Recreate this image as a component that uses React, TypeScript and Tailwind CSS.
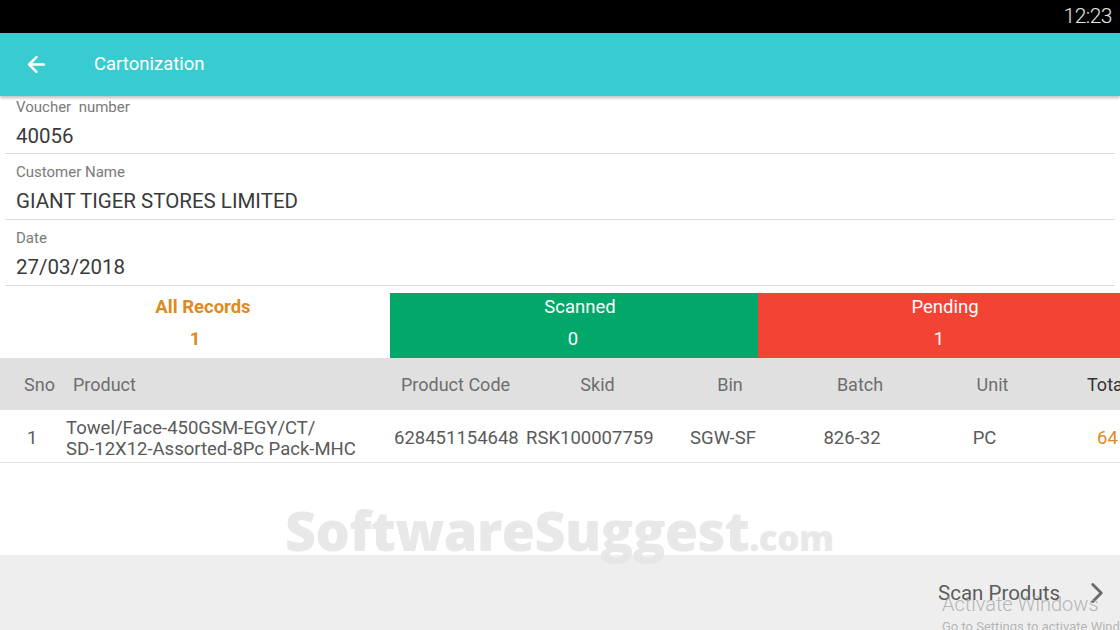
import { ArrowLeft, ChevronRight } from "lucide-react"

const fields = [
  { label: "Voucher  number", value: "40056" },
  { label: "Customer Name", value: "GIANT TIGER STORES LIMITED" },
  { label: "Date", value: "27/03/2018" },
]

export default function App() {
  return (
    <div className="relative w-[1120px] h-[630px] overflow-hidden bg-white font-['Roboto',sans-serif]">
      {/* status bar */}
      <div className="h-[33px] bg-black flex items-center justify-end pr-[8px]">
        <span className="text-[21px] text-[#e6e6e6] font-light tracking-tight">12:23</span>
      </div>

      {/* app bar */}
      <div className="relative z-10 h-[63px] bg-[#38cbcf] flex items-center shadow-[0_2px_3px_rgba(0,0,0,0.25)]">
        <div className="w-[94px] pl-[24px]">
          <ArrowLeft size={25} strokeWidth={2.4} className="text-white" />
        </div>
        <span className="text-[18.5px] text-white">Cartonization</span>
      </div>

      {/* fields */}
      <div className="px-[5px]">
        {fields.map((f, i) => (
          <div key={i} className={`border-b border-[#dcdcdc] pl-[11px] ${i === 0 ? "pt-[1px] h-[58px]" : "pt-[8px] h-[66px]"}`}>
            <div className="text-[15px] leading-[20px] text-[#7a7a7a] whitespace-pre">{f.label}</div>
            <div className="text-[20.5px] leading-[26px] mt-[6px] text-[#3a3a3a]">{f.value}</div>
          </div>
        ))}
      </div>

      {/* tabs */}
      <div className="mt-[7px] flex h-[65px] text-[18.5px]">
        <div className="w-[390px] flex flex-col items-center text-[#e08a1e] font-bold">
          <span className="mt-[2px] leading-[24px] pl-[16px]">All Records</span>
          <span className="mt-[8px] leading-[24px]">1</span>
        </div>
        <div className="w-[368px] bg-[#02a86a] flex flex-col items-center text-white">
          <span className="mt-[2px] leading-[24px] pl-[12px]">Scanned</span>
          <span className="mt-[8px] leading-[24px] pr-[2px]">0</span>
        </div>
        <div className="flex-1 bg-[#f34335] flex flex-col items-center text-white">
          <span className="mt-[2px] leading-[24px] pl-[12px]">Pending</span>
          <span className="mt-[8px] leading-[24px]">1</span>
        </div>
      </div>

      {/* table header */}
      <div className="flex items-center h-[52px] bg-[#e0e0e0] text-[18px] text-[#6e6e6e] whitespace-nowrap">
        <div className="w-[66px] shrink-0 pl-[24px]">Sno</div>
        <div className="w-[324px] shrink-0 pl-[7px]">Product</div>
        <div className="w-[135px] shrink-0 pl-[11px]">Product Code</div>
        <div className="w-[145px] shrink-0 text-center">Skid</div>
        <div className="w-[120px] shrink-0 text-center">Bin</div>
        <div className="w-[140px] shrink-0 text-center">Batch</div>
        <div className="w-[125px] shrink-0 text-center">Unit</div>
        <div className="shrink-0 pl-[32px] text-[#333]">Total</div>
      </div>

      {/* row */}
      <div className="flex items-center h-[53px] pt-[5px] border-b border-[#e3e3e3] text-[18.5px] text-[#5a5a5a] whitespace-nowrap">
        <div className="w-[66px] shrink-0 pl-[27px]">1</div>
        <div className="w-[324px] shrink-0 leading-[21px]">
          Towel/Face-450GSM-EGY/CT/
          <br />
          SD-12X12-Assorted-8Pc Pack-MHC
        </div>
        <div className="w-[136px] shrink-0 pl-[4px]">628451154648</div>
        <div className="w-[144px] shrink-0">RSK100007759</div>
        <div className="w-[120px] shrink-0 text-center pr-[14px]">SGW-SF</div>
        <div className="w-[140px] shrink-0 text-center pr-[16px]">826-32</div>
        <div className="w-[125px] shrink-0 text-center pr-[16px]">PC</div>
        <div className="shrink-0 pl-[42px] text-[#e08a1e]">64</div>
      </div>

      {/* empty area + footer */}
      <div className="h-[92px]" />
      <div className="h-[75px] bg-[#eeeeee] flex items-center justify-end pr-[6px]">
        <span className="text-[20.5px] text-[#5c5c5c] mt-[2px]">Scan Produts</span>
        <ChevronRight size={34} strokeWidth={2} className="text-[#6a6a6a] ml-[20px]" />
      </div>

      {/* watermark */}
      <div className="absolute left-[285px] top-[498px] flex items-baseline font-['Open_Sans',sans-serif] font-extrabold text-[#e6e6e6] opacity-90 pointer-events-none">
        <span className="text-[54px] leading-[64px] tracking-[-0.6px]">SoftwareSuggest</span>
        <span className="text-[35px] tracking-[-0.5px]">.com</span>
      </div>

      {/* activate windows overlay */}
      <div className="absolute left-[942px] top-[592px] text-[#9a9a9a]/70 pointer-events-none whitespace-nowrap">
        <div className="text-[20px] leading-[24px] font-light">Activate Windows</div>
        <div className="text-[13px] leading-[18px] mt-[2px]">Go to Settings to activate Windows.</div>
      </div>
    </div>
  )
}
